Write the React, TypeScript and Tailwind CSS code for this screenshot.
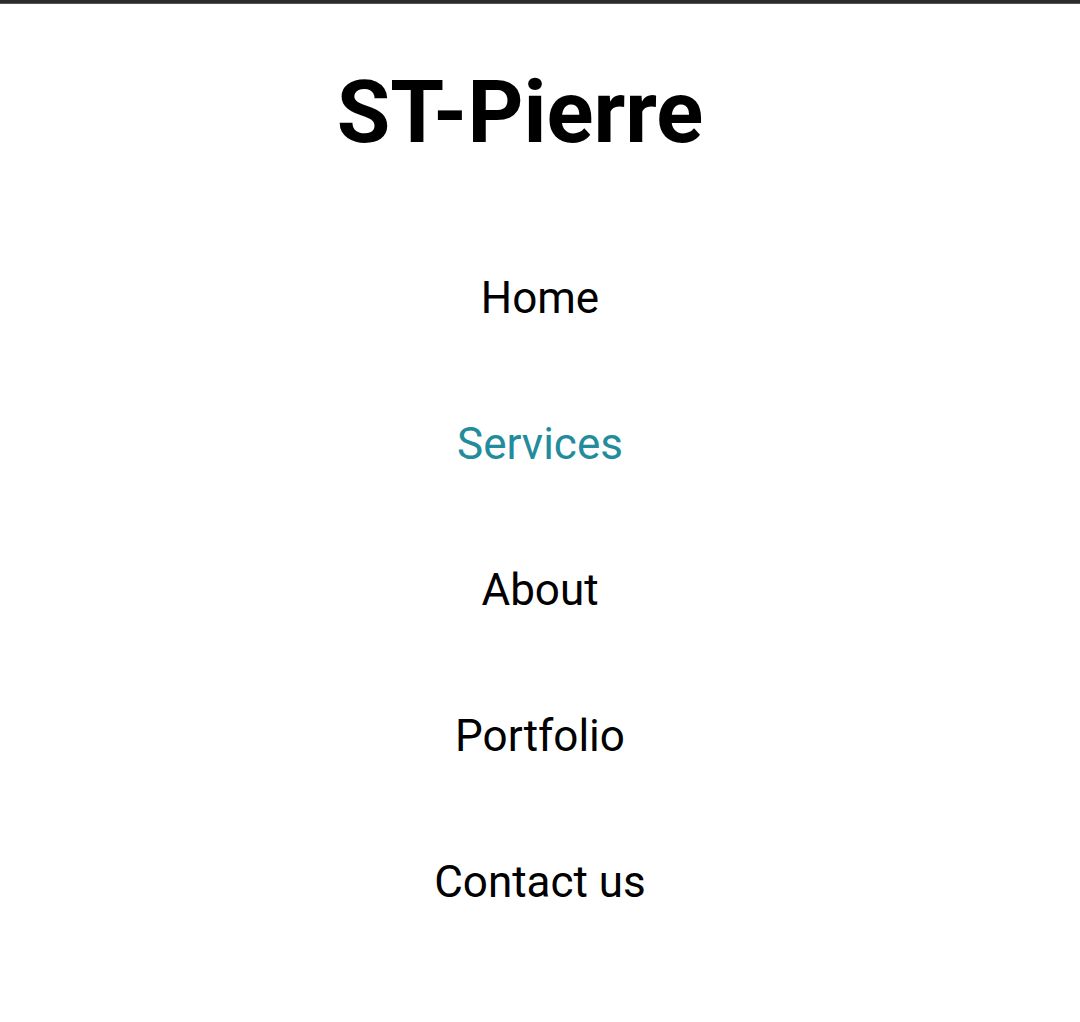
const NAV_ITEMS = ["Home", "Services", "About", "Portfolio", "Contact us"] as const;

const ACTIVE = "Services";

export default function App() {
  return (
    <div
      className="min-h-screen bg-white text-black"
      style={{ fontFamily: "Roboto, 'Noto Sans', sans-serif" }}
    >
      <div className="h-[3px] bg-[#2b2b2b]" />
      <div className="h-px bg-[#565656]" />

      <header className="mt-[65px] flex justify-center pr-[40px]">
        <h1 className="text-[87px] font-bold leading-[87px]">ST-Pierre</h1>
      </header>

      <nav className="mt-[69px]">
        <ul className="flex flex-col items-center">
          {NAV_ITEMS.map((item) => (
            <li key={item} className="h-[146px] text-[44px] leading-[146px]">
              <a
                href="#"
                className={item === ACTIVE ? "text-[#238c9c]" : "text-black"}
              >
                {item}
              </a>
            </li>
          ))}
        </ul>
      </nav>
    </div>
  );
}
